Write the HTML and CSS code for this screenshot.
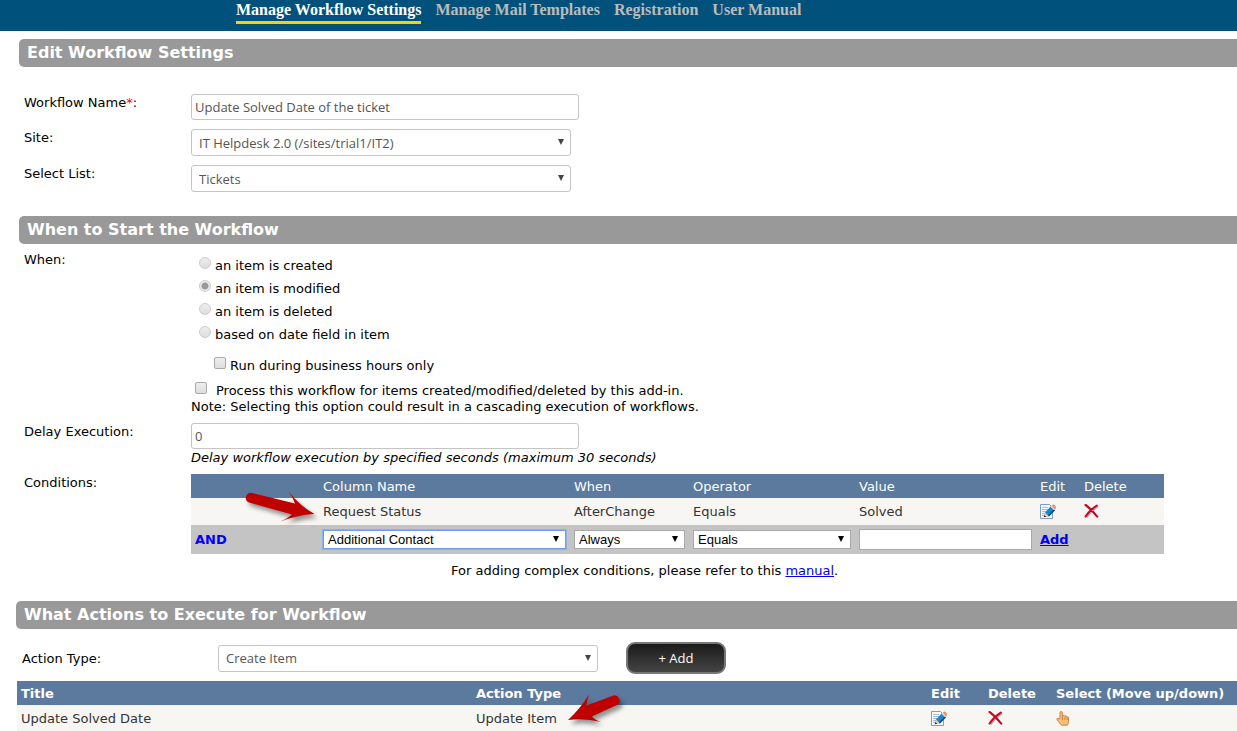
FILE: index.html
```
<!DOCTYPE html>
<html lang="en">

<head>
    <meta charset="UTF-8">
    <meta name="viewport" content="width=device-width, initial-scale=1.0">

    <link rel="stylesheet" href="styles.css">

    <title>Manage Workflow Settings</title>
</head>

<body>
    <!-- shared icons -->
    <svg class="sprite" width="0" height="0" aria-hidden="true">
        <symbol id="icon-edit" viewBox="0 0 16 16">
            <path d="M.5.5h9l3 3v11H.5z" fill="#f4f8fd" stroke="#7f9cc4" />
            <path d="M2 3.500h6M2 5.500h6M2 7.500h4M2 9.500h3M2 11.500h2" stroke="#a9bfdf" fill="none" />
            <path d="M4 13l1-4.500 6-6.500 4 4-6 6z" fill="#1c86cc" />
            <path d="M7.500 12l6-6.500 1.500 1-6 6z" fill="#0c4a82" />
            <path d="M4 13l1-4.500 4 4z" fill="#f3d2a2" />
            <path d="M3.800 13.300l.6-2.300 1.800 1.800z" fill="#222" />
            <path d="M10.500 2.700l1.300-1.300 3.600 3.600-1.300 1.300z" fill="#d5dce2" />
            <path d="M11.800 1.600q1.400-1.600 3-.6t1 3.400l-1 1z" fill="#e79366" />
        </symbol>
        <symbol id="icon-delete" viewBox="0 0 16 16">
            <path d="M2.500 2.200C6 4.500 10 8.500 14.200 13.500M14 2.200C9 5.500 6 8.500 2.500 13.500" stroke="#888" stroke-width="2" fill="none" opacity=".7" />
            <path d="M1.500.9C5 3.500 9 7.500 13 12.500M12.800 1.500C8 4.500 5 7.500 1.500 12.500" stroke="#d0021f" stroke-width="2" stroke-linecap="round" fill="none" />
        </symbol>
        <symbol id="icon-hand" viewBox="0 0 16 16">
            <path d="M4 8V1.800Q4 .5 5.200.5t1.200 1.300V5q.3-.8 1.300-.6t1.200 1q.4-.7 1.200-.5t1.100 1q1.300-.5 1.300 1v3.600q0 2-1.200 3.700H5.600Q3.500 12 1.500 9.600q-1-1.300-.4-2T3 7.800z" fill="#f7bd7c" stroke="#cf8440" />
            <path d="M6.500 5v4M9 6v3M11.200 6.500V9" stroke="#cf8440" fill="none" />
        </symbol>
    </svg>

    <nav class="nav">
        <a class="active" href="#">Manage Workflow Settings</a>
        <a href="#">Manage Mail Templates</a>
        <a href="#">Registration</a>
        <a href="#">User Manual</a>
    </nav>

    <form>
        <section class="section">
            <h2>Edit Workflow Settings</h2>
            <div class="fields fields-edit">
                <div class="row">
                    <label class="label" for="name">Workflow Name<span class="required">*</span>:</label>
                    <input type="text" class="input" id="name" value="Update Solved Date of the ticket">
                </div>
                <div class="row">
                    <label class="label" for="site">Site:</label>
                    <div class="select">
                        <select id="site">
                            <option>IT Helpdesk 2.0 (/sites/trial1/IT2)</option>
                        </select>
                    </div>
                </div>
                <div class="row">
                    <label class="label" for="list">Select List:</label>
                    <div class="select">
                        <select id="list">
                            <option>Tickets</option>
                        </select>
                    </div>
                </div>
            </div>
        </section>

        <section class="section">
            <h2>When to Start the Workflow</h2>
            <div class="fields fields-when">
                <div class="row">
                    <div class="label">When:</div>
                    <div class="options">
                        <label class="option"><input type="radio" name="when" disabled>an item is created</label>
                        <label class="option"><input type="radio" name="when" checked disabled>an item is modified</label>
                        <label class="option"><input type="radio" name="when" disabled>an item is deleted</label>
                        <label class="option"><input type="radio" name="when" disabled>based on date field in item</label>
                        <label class="option option-hours"><input type="checkbox">Run during business hours only</label>
                        <label class="option option-process"><input type="checkbox">Process this workflow for items created/modified/deleted by this add-in.</label>
                        <div>Note: Selecting this option could result in a cascading execution of workflows.</div>
                    </div>
                </div>
                <div class="row">
                    <label class="label" for="delay">Delay Execution:</label>
                    <div>
                        <input type="text" class="input" id="delay" value="0">
                        <div class="hint">Delay workflow execution by specified seconds (maximum 30 seconds)</div>
                    </div>
                </div>
                <div class="row">
                    <div class="label">Conditions:</div>
                    <div class="conditions">
                        <table class="table">
                            <colgroup>
                                <col class="col-join">
                                <col class="col-name">
                                <col class="col-when">
                                <col class="col-operator">
                                <col class="col-value">
                                <col class="col-edit">
                                <col>
                            </colgroup>
                            <tr>
                                <th></th>
                                <th>Column Name</th>
                                <th>When</th>
                                <th>Operator</th>
                                <th>Value</th>
                                <th>Edit</th>
                                <th>Delete</th>
                            </tr>
                            <tr class="data">
                                <td>
                                    <svg class="arrow arrow-condition" width="80" height="42" viewBox="0 0 80 42" aria-hidden="true">
                                        <path d="M12 4L55 14.500Q53 9 49 3Q60 17 74.500 25Q56 26 41 32.500Q48 29 52 25.500L9 13.500A5 5 0 0 1 12 4z" />
                                    </svg>
                                </td>
                                <td>Request Status</td>
                                <td>AfterChange</td>
                                <td>Equals</td>
                                <td>Solved</td>
                                <td><a href="#" aria-label="Edit"><svg class="icon"><use href="#icon-edit" /></svg></a></td>
                                <td><a href="#" aria-label="Delete"><svg class="icon"><use href="#icon-delete" /></svg></a></td>
                            </tr>
                            <tr class="new">
                                <td class="join">AND</td>
                                <td>
                                    <div class="select small focus">
                                        <select aria-label="Column Name">
                                            <option>Additional Contact</option>
                                        </select>
                                    </div>
                                </td>
                                <td>
                                    <div class="select small">
                                        <select aria-label="When">
                                            <option>Always</option>
                                        </select>
                                    </div>
                                </td>
                                <td>
                                    <div class="select small">
                                        <select aria-label="Operator">
                                            <option>Equals</option>
                                        </select>
                                    </div>
                                </td>
                                <td><input type="text" class="value" aria-label="Value"></td>
                                <td><a class="add" href="#">Add</a></td>
                                <td></td>
                            </tr>
                        </table>
                        <p class="manual">For adding complex conditions, please refer to this <a href="#">manual</a>.</p>
                    </div>
                </div>
            </div>
        </section>

        <section class="section section-actions">
            <h2>What Actions to Execute for Workflow</h2>
            <div class="action-type">
                <label class="label" for="action">Action Type:</label>
                <div class="select">
                    <select id="action">
                        <option>Create Item</option>
                    </select>
                </div>
                <button type="button">+ Add</button>
            </div>
            <table class="table actions">
                <colgroup>
                    <col>
                    <col>
                    <col class="col-action-edit">
                    <col class="col-action-delete">
                    <col class="col-action-move">
                </colgroup>
                <tr>
                    <th>Title</th>
                    <th>Action Type</th>
                    <th>Edit</th>
                    <th>Delete</th>
                    <th>Select (Move up/down)</th>
                </tr>
                <tr class="data">
                    <td>Update Solved Date</td>
                    <td>
                        Update Item
                        <svg class="arrow arrow-action" width="64" height="40" viewBox="0 0 64 40" aria-hidden="true">
                            <path d="M4 30Q16 19 25 4.500Q23 11 22.500 15.500L48 6A5 5 0 0 1 53 15L28 26.500Q31 30 37 32Q21 28 4 30z" />
                        </svg>
                    </td>
                    <td><a href="#" aria-label="Edit"><svg class="icon"><use href="#icon-edit" /></svg></a></td>
                    <td><a href="#" aria-label="Delete"><svg class="icon"><use href="#icon-delete" /></svg></a></td>
                    <td><a href="#" aria-label="Select"><svg class="icon"><use href="#icon-hand" /></svg></a></td>
                </tr>
            </table>
        </section>
    </form>
</body>

</html>
```
FILE: styles.css
```
*,
*::before,
*::after {
    box-sizing: border-box;
}

body {
    margin: 0;
    font-family: Verdana, 'DejaVu Sans', sans-serif;
    font-size: 13px;
    line-height: 16px;
    color: #000;
    overflow: hidden;
}

.sprite {
    position: absolute;
}

.nav {
    display: flex;
    align-items: flex-start;
    gap: 14px;
    height: 31px;
    padding-left: 236px;
    background: #00527c;
    font-family: 'Liberation Serif', 'Times New Roman', serif;
    font-size: 16px;
    font-weight: bold;
    line-height: 20px;
}

.nav a {
    color: #bbb;
    text-decoration: none;
    white-space: nowrap;
}

.nav .active {
    padding-bottom: 1px;
    color: #fff;
    border-bottom: 3px solid #fc1;
}

.section {
    padding-left: 19px;
}

.section:first-child {
    padding-top: 8px;
}

h2 {
    margin: 0;
    padding-left: 8px;
    border-radius: 5px 0 0 5px;
    background: #999;
    color: #fff;
    font-size: 16px;
    line-height: 28px;
}

.fields {
    padding-left: 5px;
}

.fields-edit {
    display: grid;
    gap: 9px;
    padding-top: 27px;
    padding-bottom: 24px;
}

.fields-when {
    padding-top: 7px;
}

.row {
    display: grid;
    grid-template-columns: 167px minmax(0, 1fr);
    align-items: start;
}

.label {
    padding-top: 1px;
}

.required {
    color: #f00;
}

.input,
.select select {
    display: block;
    width: 100%;
    border: 1px solid #c4c4c4;
    border-radius: 3px;
    background: #fff;
    color: #555;
    font-family: 'Segoe UI', 'Open Sans', sans-serif;
    font-size: 13px;
}

.input {
    max-width: 388px;
    height: 26px;
    padding: 0 3px;
}

.select {
    position: relative;
    width: 100%;
    max-width: 380px;
}

.select select {
    height: 27px;
    padding: 0 7px;
    appearance: none;
}

.select::after {
    content: '';
    position: absolute;
    top: 10px;
    right: 7px;
    border: solid transparent;
    border-width: 6px 3px 0;
    border-top-color: #444;
}

.options {
    padding-top: 3px;
    padding-bottom: 8px;
}

.option {
    display: flex;
    gap: 4px;
    padding: 4px 0 3px 8px;
}

.option input {
    width: 12px;
    height: 12px;
    margin: -1px 0 0;
    border: 1px solid #aaa;
    border-radius: 2px;
    background: linear-gradient(#eee, #ddd);
    appearance: none;
}

.option input[type=radio] {
    border-color: #ccc;
    border-radius: 50%;
}

.option input:checked {
    background: radial-gradient(#999 0 3px, #eee 4px);
}

.option-hours {
    padding: 12px 0 9px 23px;
}

.option-process {
    gap: 9px;
    padding: 0 0 0 4px;
}

.hint {
    padding: 1px 0 8px;
    font-style: italic;
}

.conditions {
    max-width: 973px;
}

.table {
    width: 100%;
    border-collapse: collapse;
    table-layout: fixed;
    color: #333;
}

.table th,
.table td {
    padding: 0 4px;
    text-align: left;
    white-space: nowrap;
}

.table th {
    height: 24px;
    padding-top: 2px;
    background: #5c7a9d;
    color: #fff;
    font-weight: normal;
}

.data {
    height: 27px;
    background: #f7f6f3;
}

.data td {
    position: relative;
}

.new {
    height: 29px;
    background: #c4c4c4;
}

.col-join {
    width: 128px;
}

.col-name {
    width: 251px;
}

.col-when {
    width: 119px;
}

.col-operator {
    width: 166px;
}

.col-value {
    width: 181px;
}

.col-edit {
    width: 44px;
}

.join,
.add {
    color: #00f;
    font-weight: bold;
}

.small select {
    height: 19px;
    padding: 0 4px;
    border-color: #a9a9a9;
    border-radius: 0;
    color: #000;
    font-family: Arial, 'Liberation Sans', sans-serif;
}

.small::after {
    top: 6px;
    border-top-color: #000;
}

.focus select {
    border-color: #6f9de8;
    box-shadow: 0 0 0 1px #8fb0e6;
}

.value {
    display: block;
    width: 100%;
    height: 21px;
    border: 1px solid #a9a9a9;
}

.manual {
    margin: 0;
    padding: 9px 0 22px 260px;
}

.manual a,
.add {
    color: #00e;
}

.icon {
    display: block;
    width: 16px;
    height: 16px;
}

.arrow {
    position: absolute;
    z-index: 1;
    filter: drop-shadow(3px 4px 2px rgba(0, 0, 0, 0.4));
    overflow: visible;
}

.arrow path {
    fill: #c00000;
}

.arrow-condition {
    top: -9px;
    left: 49px;
}

.arrow-action {
    top: -15px;
    left: 92px;
}

.section-actions {
    padding-left: 16px;
}

.action-type {
    display: grid;
    grid-template-columns: 196px minmax(0, 380px) 100px;
    align-items: center;
    padding: 13px 0 7px 6px;
}

.action-type button {
    width: 100px;
    height: 32px;
    margin-left: 28px;
    border: 2px solid #777;
    border-radius: 9px;
    background: linear-gradient(#1b1b1b, #444);
    color: #fff;
    font-family: 'Segoe UI', 'Open Sans', sans-serif;
    font-size: 13px;
}

.actions {
    width: calc(100% - 1px);
    margin-left: 1px;
}

.actions th {
    font-weight: bold;
}

.col-action-edit {
    width: 57px;
}

.col-action-delete {
    width: 68px;
}

.col-action-move {
    width: 185px;
}
```
